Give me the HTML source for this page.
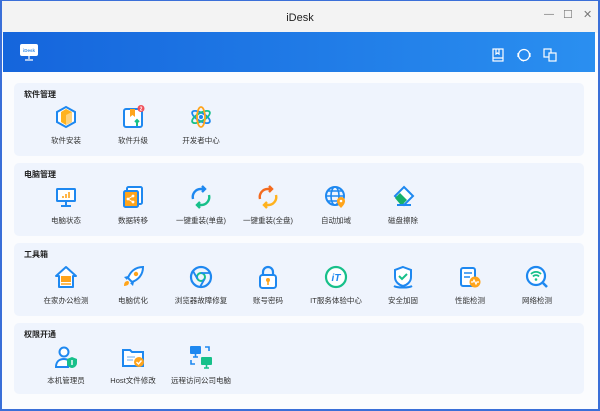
<!DOCTYPE html>
<html><head><meta charset="utf-8"><style>
*{margin:0;padding:0;box-sizing:border-box}
body{width:600px;height:411px;overflow:hidden;background:#fff;font-family:"Liberation Sans","Noto Sans CJK SC",sans-serif;position:relative}
.win{position:absolute;left:0;top:0;width:600px;height:411px;border:1px solid #3a6fd8;border-width:1px 2px 2px 2px;background:#fbfcfe}
.title{position:absolute;left:0;top:0;width:596px;height:32px;background:#f3f3f3;text-align:center;font-size:11px;line-height:34px;color:#222}
.ctl{position:absolute;top:0;font-size:10px;line-height:30px;color:#777}
.hdr{position:absolute;left:3px;top:32px;width:592px;height:40px;background:linear-gradient(90deg,#1565dc,#2a8ff0);}
.card{position:absolute;left:14px;width:570px;height:73px;background:#eff4fd;border-radius:5px}
.card h3{position:absolute;left:10px;top:6px;font-size:8px;font-weight:bold;color:#222}
.it{position:absolute;width:80px;margin-left:-40px;text-align:center}
.it svg{display:block;margin:0 auto;width:24px;height:24px}
.it span{display:block;font-size:7.5px;color:#333;margin-top:6px;white-space:nowrap}
</style></head><body>
<div class="win"></div>
<div class="title" style="left:2px;top:1px">iDesk</div>
<div class="ctl" style="left:544px">—</div>
<div class="ctl" style="left:563px;font-size:11px">☐</div>
<div class="ctl" style="left:583px;font-size:11px">✕</div>
<div class="hdr">
 <svg style="position:absolute;left:16px;top:12px" width="22" height="22" viewBox="0 0 22 22"><rect x="1" y="0" width="18" height="12" rx="2" fill="#fff"/><text x="10" y="8" font-size="4.5" fill="#3a8ee8" text-anchor="middle" font-family="Liberation Sans" font-weight="bold">iDesk</text><path d="M10 12v3M6 16h8" stroke="#fff" stroke-width="1.2"/></svg>
 <svg style="position:absolute;left:488px;top:16px" width="14" height="14" viewBox="0 0 14 14" fill="none" stroke="#fff" stroke-width="1.2"><rect x="2" y="1" width="10" height="12"/><path d="M2 10h10M5 1v5l1.5-1 1.5 1V1"/></svg>
 <svg style="position:absolute;left:513px;top:15px" width="16" height="16" viewBox="0 0 16 16" fill="none" stroke="#fff" stroke-width="1.2"><circle cx="8" cy="8" r="5.5"/><path d="M2 6v4M14 6v4M5 13l3 1"/></svg>
 <svg style="position:absolute;left:539px;top:15px" width="16" height="16" viewBox="0 0 16 16" fill="none" stroke="#fff" stroke-width="1.2"><rect x="2" y="2" width="7" height="8"/><rect x="7" y="6" width="7" height="8" fill="#2a8ff0"/></svg>
</div>

<div class="card" style="top:83px"><h3>软件管理</h3></div>
<div class="card" style="top:163px"><h3>电脑管理</h3></div>
<div class="card" style="top:243px"><h3>工具箱</h3></div>
<div class="card" style="top:323px;height:71px"><h3>权限开通</h3></div>

<div class="it" style="left:66px;top:105px"><svg viewBox="0 0 24 24"><path d="M12 2l9 5v10l-9 5-9-5V7z" fill="#fff" stroke="#1e88f0" stroke-width="2"/><path d="M7 7l5-3 6 3v10l-6 3-5-3z" fill="#ffb21e"/><path d="M12 10v10l6-3V7z" fill="#ffd27a"/></svg><span>软件安装</span></div>
<div class="it" style="left:133px;top:105px"><svg viewBox="0 0 24 24"><rect x="3" y="4" width="18" height="18" rx="2" fill="#fff" stroke="#1e88f0" stroke-width="2"/><path d="M9 4h5v8l-2.5-2L9 12z" fill="#ffa41b"/><path d="M16 21v-6M14 17l2-2 2 2" stroke="#17c08a" stroke-width="2" fill="none"/><circle cx="20" cy="3.5" r="3.5" fill="#f0505a"/><text x="20" y="5.5" font-size="5" fill="#fff" text-anchor="middle" font-family="Liberation Sans" font-weight="bold">2</text></svg><span>软件升级</span></div>
<div class="it" style="left:201px;top:105px"><svg viewBox="0 0 24 24" fill="none" stroke-width="1.8"><ellipse cx="12" cy="12" rx="10" ry="4" stroke="#1e88f0" transform="rotate(30 12 12)"/><ellipse cx="12" cy="12" rx="10" ry="4" stroke="#17c08a" transform="rotate(-30 12 12)"/><ellipse cx="12" cy="12" rx="10" ry="4" stroke="#ffa41b" transform="rotate(90 12 12)"/><circle cx="12" cy="12" r="2" fill="#1e88f0"/></svg><span>开发者中心</span></div>

<div class="it" style="left:66px;top:185px"><svg viewBox="0 0 24 24"><rect x="2" y="3" width="20" height="14" rx="1.5" fill="#1e88f0"/><rect x="4" y="5" width="16" height="10" fill="#fff"/><path d="M9 13v-2M12 13V9M15 13V7" stroke="#ffa41b" stroke-width="1.6"/><path d="M12 17v3M7 21h10" stroke="#1e88f0" stroke-width="2"/></svg><span>电脑状态</span></div>
<div class="it" style="left:133px;top:185px"><svg viewBox="0 0 24 24"><rect x="6" y="2" width="15" height="17" rx="1.5" fill="#fff" stroke="#1e88f0" stroke-width="2"/><rect x="3" y="6" width="14" height="16" rx="1.5" fill="#ffa41b" stroke="#1e88f0" stroke-width="2"/><circle cx="7" cy="14" r="1.4" fill="#fff"/><circle cx="12" cy="11" r="1.4" fill="#fff"/><circle cx="12" cy="17" r="1.4" fill="#fff"/><path d="M7 14l5-3M7 14l5 3" stroke="#fff"/></svg><span>数据转移</span></div>
<div class="it" style="left:201px;top:185px"><svg viewBox="0 0 24 24" fill="none" stroke-width="2.4"><path d="M4 14A8 8 0 0 1 12 4h3" stroke="#1e88f0"/><path d="M20 10a8 8 0 0 1-8 10H9" stroke="#17c08a"/><path d="M13 1l3 3-3 3" stroke="#1e88f0"/><path d="M11 17l-3 3 3 3" stroke="#17c08a"/></svg><span>一键重装(单盘)</span></div>
<div class="it" style="left:268px;top:185px"><svg viewBox="0 0 24 24" fill="none" stroke-width="2.4"><path d="M4 14A8 8 0 0 1 12 4h3" stroke="#f36a1e"/><path d="M20 10a8 8 0 0 1-8 10H9" stroke="#ffb21e"/><path d="M13 1l3 3-3 3" stroke="#f36a1e"/><path d="M11 17l-3 3 3 3" stroke="#ffb21e"/></svg><span>一键重装(全盘)</span></div>
<div class="it" style="left:336px;top:185px"><svg viewBox="0 0 24 24" fill="none"><circle cx="11" cy="11" r="9" stroke="#1e88f0" stroke-width="2"/><ellipse cx="11" cy="11" rx="4" ry="9" stroke="#1e88f0" stroke-width="1.6"/><path d="M2 11h18M4 6h14M4 16h14" stroke="#1e88f0" stroke-width="1.4"/><path d="M17 23c-3-3-4-5-4-7a4 4 0 0 1 8 0c0 2-1 4-4 7z" fill="#ffa41b"/><circle cx="17" cy="16" r="1.3" fill="#fff"/></svg><span>自动加域</span></div>
<div class="it" style="left:403px;top:185px"><svg viewBox="0 0 24 24"><path d="M13 2l9 9-9 9-9-9z" fill="#fff" stroke="#1e88f0" stroke-width="2"/><path d="M4 13l5-5 7 7-4 4H9z" fill="#17b06a"/><path d="M6 20h14" stroke="#1e88f0" stroke-width="2"/></svg><span>磁盘擦除</span></div>

<div class="it" style="left:66px;top:265px"><svg viewBox="0 0 24 24"><path d="M12 2L2 11h3v11h14V11h3z" fill="#fff" stroke="#1e88f0" stroke-width="2" stroke-linejoin="round"/><rect x="7" y="11" width="10" height="6" fill="#ffa41b"/><path d="M7 19h10" stroke="#ffa41b" stroke-width="1.5"/></svg><span>在家办公检测</span></div>
<div class="it" style="left:133px;top:265px"><svg viewBox="0 0 24 24"><path d="M22 2c-8 0-13 5-15 11l4 4c6-2 11-7 11-15z" fill="#fff" stroke="#1e88f0" stroke-width="2"/><circle cx="15" cy="9" r="2.2" fill="#ffa41b"/><path d="M3 21c0-3 1-5 4-5l1 1c0 3-2 4-5 4z" fill="#ffa41b"/><path d="M7 11L3 12l3 3M13 17l-1 4-3-3" fill="#1e88f0"/></svg><span>电脑优化</span></div>
<div class="it" style="left:201px;top:265px"><svg viewBox="0 0 24 24" fill="none"><circle cx="12" cy="12" r="10" stroke="#1e88f0" stroke-width="2.2"/><circle cx="12" cy="12" r="4" stroke="#17c08a" stroke-width="2"/><path d="M12 8h9M8.5 14L4 6M15.5 14L11 22" stroke="#1e88f0" stroke-width="1.8"/></svg><span>浏览器故障修复</span></div>
<div class="it" style="left:268px;top:265px"><svg viewBox="0 0 24 24" fill="none"><path d="M7 11V7a5 5 0 0 1 10 0v4" stroke="#1e88f0" stroke-width="2.2"/><rect x="4" y="10" width="16" height="13" rx="2.5" fill="#fff" stroke="#1e88f0" stroke-width="2"/><circle cx="12" cy="15" r="2" fill="#ffa41b"/><path d="M12 16v4" stroke="#ffa41b" stroke-width="1.6"/></svg><span>账号密码</span></div>
<div class="it" style="left:336px;top:265px"><svg viewBox="0 0 24 24"><circle cx="12" cy="12" r="10" fill="#fff" stroke="#17c08a" stroke-width="2.2"/><text x="12" y="16" font-size="10" fill="#1e88f0" text-anchor="middle" font-family="Liberation Sans" font-weight="bold" font-style="italic">iT</text></svg><span>IT服务体验中心</span></div>
<div class="it" style="left:403px;top:265px"><svg viewBox="0 0 24 24" fill="none"><path d="M12 2l8 3v7c0 5-4 8-8 9-4-1-8-4-8-9V5z" fill="#fff" stroke="#1e88f0" stroke-width="2"/><path d="M8 11l3 3 5-5" stroke="#17c08a" stroke-width="2"/><path d="M3 21c3 2 15 2 18 0" stroke="#1e88f0" stroke-width="2"/></svg><span>安全加固</span></div>
<div class="it" style="left:470px;top:265px"><svg viewBox="0 0 24 24" fill="none"><rect x="3" y="3" width="14" height="18" rx="2" fill="#fff" stroke="#1e88f0" stroke-width="2"/><path d="M6 8h8M6 12h6" stroke="#1e88f0" stroke-width="1.6"/><circle cx="17" cy="17" r="5.5" fill="#ffa41b"/><path d="M13 17h2l1-2 2 4 1-2h2" stroke="#fff" stroke-width="1.2"/></svg><span>性能检测</span></div>
<div class="it" style="left:537px;top:265px"><svg viewBox="0 0 24 24" fill="none"><circle cx="11" cy="11" r="9" fill="#fff" stroke="#1e88f0" stroke-width="2.2"/><path d="M6 9a7 7 0 0 1 10 0M8 11.5a4 4 0 0 1 6 0" stroke="#17c08a" stroke-width="1.8"/><circle cx="11" cy="14.5" r="1.3" fill="#17c08a"/><path d="M18 18l4 4" stroke="#1e88f0" stroke-width="2.6"/></svg><span>网络检测</span></div>

<div class="it" style="left:66px;top:345px"><svg viewBox="0 0 24 24"><circle cx="10" cy="7" r="4.5" fill="#fff" stroke="#1e88f0" stroke-width="2"/><path d="M2 22c0-5 3-8 8-8 2 0 3 .5 4 1v7z" fill="#fff" stroke="#1e88f0" stroke-width="2"/><path d="M18 12l5 2v4c0 3-3 5-5 5-2 0-5-2-5-5v-4z" fill="#17c08a"/><path d="M18 15v5" stroke="#fff" stroke-width="1.4"/></svg><span>本机管理员</span></div>
<div class="it" style="left:133px;top:345px"><svg viewBox="0 0 24 24"><path d="M2 5h7l2 2h11v14H2z" fill="#fff" stroke="#1e88f0" stroke-width="2"/><path d="M6 12h8M6 15h6" stroke="#9ec8f5" stroke-width="1.4"/><circle cx="18" cy="17" r="5" fill="#ffa41b"/><path d="M15.5 17l2 2 3-3.5" stroke="#fff" stroke-width="1.4" fill="none"/></svg><span>Host文件修改</span></div>
<div class="it" style="left:201px;top:345px"><svg viewBox="0 0 24 24" fill="none"><rect x="1" y="1" width="11" height="8" rx="1" fill="#1e88f0"/><path d="M6.5 9v3M4 12h5" stroke="#1e88f0" stroke-width="1.6"/><rect x="12" y="12" width="11" height="8" rx="1" fill="#17c08a"/><path d="M17.5 20v3M15 23h5" stroke="#17c08a" stroke-width="1.6"/><path d="M16 2h4v4M2 15v4h4" stroke="#1e88f0" stroke-width="1.6"/></svg><span>远程访问公司电脑</span></div>
</body></html>
